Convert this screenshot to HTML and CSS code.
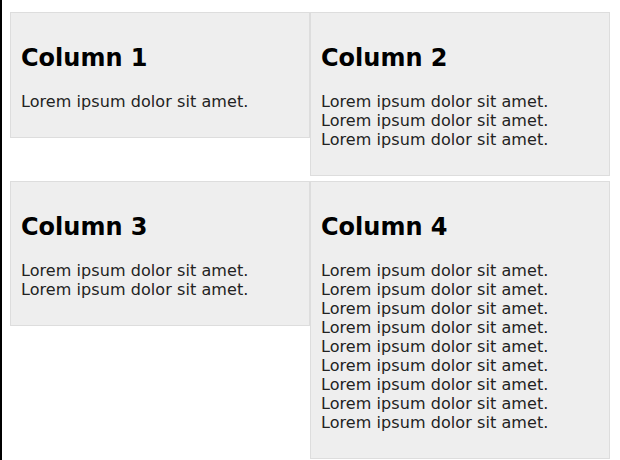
FILE: index.html
```html
<!DOCTYPE html>
<html>
<head>
    <title>Columns</title>
    <link rel="stylesheet" href="styles.css">
</head>
<body>
    <div class="page">
        <div class="row">
            <div class="column">
                <h2>Column 1</h2>
                <p>Lorem ipsum dolor sit amet.</p>
            </div>
            <div class="column">
                <h2>Column 2</h2>
                <p>Lorem ipsum dolor sit amet.<br>Lorem ipsum dolor sit amet.<br>Lorem ipsum dolor sit amet.</p>
            </div>
        </div>
        <div class="row">
            <div class="column">
                <h2>Column 3</h2>
                <p>Lorem ipsum dolor sit amet.<br>Lorem ipsum dolor sit amet.</p>
            </div>
            <div class="column">
                <h2>Column 4</h2>
                <p>Lorem ipsum dolor sit amet.<br>Lorem ipsum dolor sit amet.<br>Lorem ipsum dolor sit amet.<br>Lorem ipsum dolor sit amet.<br>Lorem ipsum dolor sit amet.<br>Lorem ipsum dolor sit amet.<br>Lorem ipsum dolor sit amet.<br>Lorem ipsum dolor sit amet.<br>Lorem ipsum dolor sit amet.</p>
            </div>
        </div>
    </div>
</body>
</html>
```

FILE: styles.css
```css
html, body {
    margin: 0;
    height: 100%;
}

body {
    font-family: 'DejaVu Sans', Verdana, sans-serif;
    font-size: 16px;
    color: #222;
    background-color: #fff;
}

.page {
    box-sizing: border-box;
    min-height: 100%;
    border-left: 2px solid #000;
    padding: 12px 8px 0 8px;
}

.row {
    display: flex;
    align-items: flex-start;
}

.row + .row {
    margin-top: 5px;
}

.column {
    box-sizing: border-box;
    width: 300px;
    padding: 10px;
    background-color: #eee;
    border: 1px solid #ddd;
}

.column h2 {
    font-size: 24px;
    font-weight: bold;
    color: #000;
    margin: 21px 0 20px 0;
}

.column p {
    margin: 0 0 16px 0;
    letter-spacing: 0.07px;
}
```
